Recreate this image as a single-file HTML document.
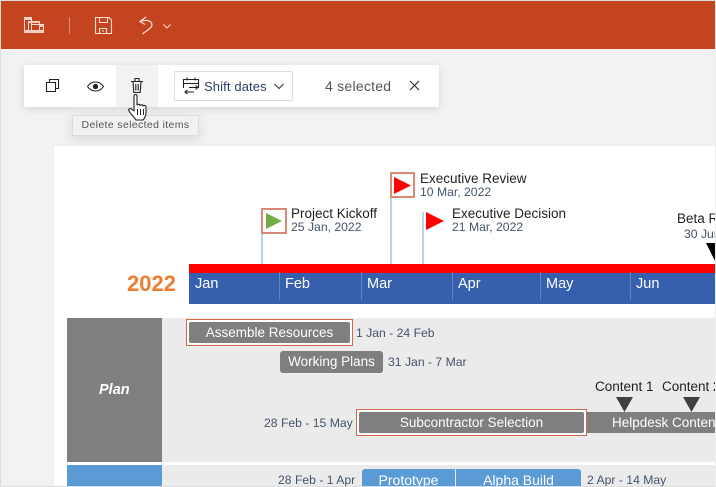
<!DOCTYPE html>
<html style="overflow:hidden;width:716px;height:487px"><head><meta charset="utf-8">
<style>
html,body{margin:0;padding:0}
body{width:716px;height:487px;position:relative;overflow:hidden;background:#f2f2f2;font-family:"Liberation Sans",sans-serif}
#root{position:absolute;left:0;top:0;width:716px;height:487px;overflow:hidden;contain:paint}
.a{position:absolute;white-space:nowrap}
.t{font-size:13.5px;color:#222;line-height:16px}
.d{font-size:12.2px;color:#44546a;line-height:14px}
.m{font-size:14.5px;color:#fff;line-height:16px;top:276px}
.sep{position:absolute;top:272px;width:1px;height:28px;background:#6484bd}
.bar{position:absolute;background:#7f7f7f;color:#fff;font-size:13.5px;text-align:center;box-sizing:border-box;white-space:nowrap;overflow:hidden}
.sel{position:absolute;border:1px solid #d2694e;background:#fff;box-sizing:border-box}
.stem{position:absolute;width:2px;background:#b4d5ee}
svg{position:absolute;overflow:visible}
.clip{overflow:hidden}
</style></head><body><div id="root">
<div class="a" style="left:1px;top:1px;width:715px;height:48px;background:#c54420"></div>

<svg style="left:0;top:0" width="190" height="50" fill="none" stroke="#f8ddd3" stroke-width="1">
<path d="M24.500 17.500h7v14h-7zM28.500 21.500h11v10h-11zM31.500 24.500h12v7h-12z"/>
<path d="M24 18h7v2h-7zM28 21h12v2H28zM39 25h5v2h-5zM24 30h20v3H24z" fill="#f3d0c4" stroke="none"/>
<path d="M69.500 17v17" stroke="#dc8c74"/>
<path d="M95.500 17.500h13.500l2.500 2.500v13.500h-16zM99.500 17.500v5h8v-5M99.500 33.500v-5h7v5M102 31h2" stroke-width="1.100"/>
<path d="M146 17l-6 4.500 5 3M140 21.500c5-2 12-1.500 12 3.500 0 3-6 6-9.500 9" stroke-width="1.200"/>
<path d="M163.500 24.500l3.500 3.500 3.500-3.500" stroke-width="1.100"/>
</svg>

<div class="a" style="left:24px;top:65px;width:415px;height:42px;background:#fff;border-radius:2px;box-shadow:0 2px 8px rgba(0,0,0,.12)"></div>
<div class="a" style="left:116px;top:65px;width:42px;height:42px;background:#f2f2f2"></div>
<svg style="left:0;top:60px" width="170" height="60" fill="none" stroke="#222" stroke-width="1.100">
<path d="M46.500 22.500h9v9h-9zM49.500 22v-2.500h9v9h-3"/>
<path d="M87.500 26.500c4-6 12-6 16 0-4 6-12 6-16 0z"/><circle cx="95.500" cy="26.500" r="2.600" fill="#222" stroke="none"/>
<path d="M131 21.500h12M133 21.500l.8 11h6.400l.8-11M135 21v-2.500h4V21M135.800 24v6.500M138.200 24v6.500"/>
</svg>

<div class="a" style="left:174px;top:71px;width:119px;height:30px;border:1px solid #dcdcdc;border-radius:2px;box-sizing:border-box;background:#fff"></div>
<svg style="left:180px;top:76px" width="24" height="22" fill="none" stroke="#222" stroke-width="1.100">
<path d="M3.500 12V3.500h15V12M3.500 7.500h15M7 1.500v3M15 1.500v3"/>
<path d="M9 11.500h9M15.500 9.500l2.500 2-2.500 2M14 16H5M7.500 14l-2.500 2 2.500 2"/>
</svg>
<div class="a" style="left:204px;top:79px;font-size:13px;line-height:15px;color:#2b3f63;letter-spacing:.12px">Shift dates</div>
<svg style="left:273px;top:82px" width="14" height="10" fill="none" stroke="#333" stroke-width="1.100"><path d="M1.500 2l4.500 4.500L10.500 2"/></svg>
<div class="a" style="left:325px;top:78px;font-size:14px;line-height:16px;color:#555;letter-spacing:.25px">4 selected</div>
<svg style="left:409px;top:80px" width="12" height="12" fill="none" stroke="#333" stroke-width="1.200"><path d="M1 1l9 9M10 1l-9 9"/></svg>

<div class="a" style="left:72px;top:115px;width:127px;height:21px;box-sizing:border-box;border:1px solid #dcdcdc;background:#f2f2f2;font-size:10.500px;line-height:19px;color:#555;text-align:center;letter-spacing:.36px;box-shadow:0 4px 12px rgba(0,0,0,.1)">Delete selected items</div>

<div class="a" style="left:54px;top:146px;width:662px;height:341px;background:#fff"></div>

<div class="stem" style="left:261px;top:233px;height:32px"></div>
<div class="stem" style="left:390px;top:197px;height:68px"></div>
<div class="stem" style="left:422px;top:212px;height:53px"></div>
<div class="a" style="left:261px;top:208px;width:26px;height:26px;border:2px solid #d98a76;box-sizing:border-box;background:#fff"></div>
<div class="a" style="left:390px;top:172px;width:25px;height:26px;border:2px solid #d98a76;box-sizing:border-box;background:#fff"></div>
<svg style="left:0;top:0" width="716" height="300">
<path d="M266 213l16 8-16 8z" fill="#70ad47"/>
<path d="M394 177l17 8.500-17 8.500z" fill="#f00"/>
<path d="M426 212l18 9-18 9z" fill="#f00"/>
<path d="M706 243h10v20z" fill="#000"/>
</svg>
<div class="a t" style="left:291px;top:206px">Project Kickoff</div>
<div class="a d" style="left:291px;top:220px">25 Jan, 2022</div>
<div class="a t" style="left:420px;top:171px">Executive Review</div>
<div class="a d" style="left:420px;top:185px">10 Mar, 2022</div>
<div class="a t" style="left:452px;top:206px">Executive Decision</div>
<div class="a d" style="left:452px;top:220px">21 Mar, 2022</div>
<div class="a t clip" style="left:677px;top:211px;width:39px">Beta Release</div>
<div class="a d clip" style="left:684px;top:227px;width:32px">30 Jun, 2022</div>

<div class="a" style="left:127px;top:271px;font-size:22px;line-height:25px;font-weight:bold;color:#ed7d31">2022</div>
<div class="a" style="left:189px;top:264px;width:527px;height:9px;background:#f00"></div>
<div class="a" style="left:189px;top:273px;width:527px;height:31px;background:#3660ad"></div>
<div class="sep" style="left:279px"></div>
<div class="sep" style="left:361px"></div>
<div class="sep" style="left:452px"></div>
<div class="sep" style="left:540px"></div>
<div class="sep" style="left:630px"></div>
<div class="a m" style="left:195px">Jan</div>
<div class="a m" style="left:285px">Feb</div>
<div class="a m" style="left:367px">Mar</div>
<div class="a m" style="left:458px">Apr</div>
<div class="a m" style="left:546px">May</div>
<div class="a m" style="left:636px">Jun</div>

<div class="a" style="left:162px;top:318px;width:554px;height:144px;background:#ebebeb"></div>
<div class="a" style="left:67px;top:318px;width:95px;height:144px;background:#7f7f7f"></div>
<div class="a" style="left:99px;top:382px;font-size:14.5px;line-height:16px;font-weight:bold;font-style:italic;color:#fff">Plan</div>

<div class="sel" style="left:186px;top:319px;width:167px;height:27px"></div>
<div class="bar" style="left:189px;top:322px;width:161px;height:21px;line-height:21px;border-radius:2px">Assemble Resources</div>
<div class="a d" style="left:356px;top:326px">1 Jan - 24 Feb</div>

<div class="bar" style="left:280px;top:351px;width:103px;height:22px;line-height:22px;border-radius:3px">Working Plans</div>
<div class="a d" style="left:388px;top:355px">31 Jan - 7 Mar</div>

<div class="a d" style="left:264px;top:416px">28 Feb - 15 May</div>
<div class="sel" style="left:356px;top:409px;width:231px;height:27px"></div>
<div class="bar" style="left:359px;top:412px;width:225px;height:21px;line-height:22px;border-radius:2px">Subcontractor Selection</div>
<div class="bar" style="left:587px;top:412px;width:129px;height:21px;line-height:22px;text-align:left;padding-left:25px">Helpdesk Content</div>
<div class="a t" style="left:595px;top:379px">Content 1</div>
<div class="a t clip" style="left:662px;top:379px;width:54px">Content 2</div>
<svg style="left:0;top:0" width="716" height="487">
<path d="M616 397h17l-8.500 15zM683 397h17l-8.500 15z" fill="#404040"/>
</svg>

<div class="a" style="left:162px;top:465px;width:554px;height:22px;background:#ebebeb"></div>
<div class="a" style="left:67px;top:465px;width:95px;height:22px;background:#5b9bd5"></div>
<div class="a d" style="left:278px;top:473px">28 Feb - 1 Apr</div>
<div class="bar" style="left:362px;top:469px;width:93px;height:18px;line-height:22px;font-size:14px;background:#5b9bd5;border-radius:3px 0 0 0">Prototype</div>
<div class="bar" style="left:456px;top:469px;width:125px;height:18px;line-height:22px;font-size:14px;background:#5b9bd5;border-radius:0 3px 0 0">Alpha Build</div>
<div class="a d" style="left:587px;top:473px">2 Apr - 14 May</div>

<svg style="left:127px;top:93px" width="24" height="30">
<path d="M7 3c0-2 3-2 3 0v9c0-1 3-1 3 .5 0-1 3-1 3 .5 0-1 3-1 3 1v6c0 3-2 6-3 7H9c-1-2-6-7-7-9-1-2 1-3 2.500-2L7 18z" fill="#fff" stroke="#222" stroke-width="1.100" stroke-linejoin="round"/>
<path d="M10.500 16v6M13.500 16v6M16.500 16v6" stroke="#222" fill="none"/>
</svg>

<div class="a" style="left:0;top:0;width:716px;height:487px;box-sizing:border-box;border:1px solid #dedede;border-right-color:#eee"></div>
</div></body></html>
